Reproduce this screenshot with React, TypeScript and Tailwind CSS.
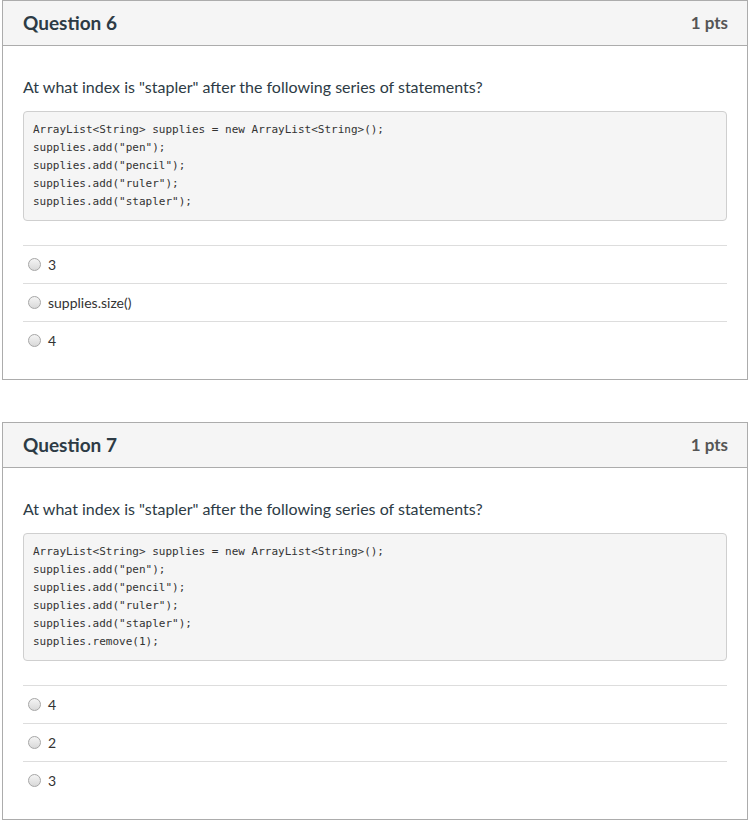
import React from "react";

const Radio = () => (
  <span className="inline-block w-[13px] h-[13px] rounded-full border border-[#a6a6a6] bg-gradient-to-b from-[#f4f4f4] to-[#d9d9d9] shrink-0" />
);

type Q = { n: number; code: string[]; answers: string[] };

const questions: Q[] = [
  {
    n: 6,
    code: [
      "ArrayList<String> supplies = new ArrayList<String>();",
      'supplies.add("pen");',
      'supplies.add("pencil");',
      'supplies.add("ruler");',
      'supplies.add("stapler");',
    ],
    answers: ["3", "supplies.size()", "4"],
  },
  {
    n: 7,
    code: [
      "ArrayList<String> supplies = new ArrayList<String>();",
      'supplies.add("pen");',
      'supplies.add("pencil");',
      'supplies.add("ruler");',
      'supplies.add("stapler");',
      "supplies.remove(1);",
    ],
    answers: ["4", "2", "3"],
  },
];

function Card({ q }: { q: Q }) {
  return (
    <div className="ml-[2px] w-[746px] border border-[#acacac] bg-white">
      <div className="h-[45px] bg-[#f5f5f5] border-b border-[#acacac] flex items-center justify-between pl-[20px] pr-[19px]">
        <div className="text-[19px] font-bold text-[#2d3b45]">Question {q.n}</div>
        <div className="text-[17px] font-bold text-[#555]">1 pts</div>
      </div>
      <div className="px-[20px] pt-[31px] pb-[20px]">
        <div className="text-[16px] leading-[20px] text-[#2d3b45]">
          At what index is "stapler" after the following series of statements?
        </div>
        <div className="mt-[14px] rounded-[4px] border border-[#cfcfcf] bg-[#f5f5f5] pl-[9px] pt-[9px] pb-[9px]">
          {q.code.map((l, i) => (
            <div
              key={i}
              className="text-[11px] leading-[18px] text-[#333] whitespace-pre"
              style={{ fontFamily: '"DejaVu Sans Mono", "Liberation Mono", monospace' }}
            >
              {l}
            </div>
          ))}
        </div>
        <div className="mt-[24px]">
          {q.answers.map((a, i) => (
            <div key={i} className="h-[38px] border-t border-[#ddd] flex items-center pl-[5px] gap-[7px]">
              <Radio />
              <span className="text-[14px] text-[#333]">{a}</span>
            </div>
          ))}
        </div>
      </div>
    </div>
  );
}

export default function App() {
  return (
    <div className="w-[749px] h-[821px] bg-white" style={{ fontFamily: 'Lato, "Liberation Sans", sans-serif' }}>
      <Card q={questions[0]} />
      <div className="h-[42px]" />
      <Card q={questions[1]} />
    </div>
  );
}
